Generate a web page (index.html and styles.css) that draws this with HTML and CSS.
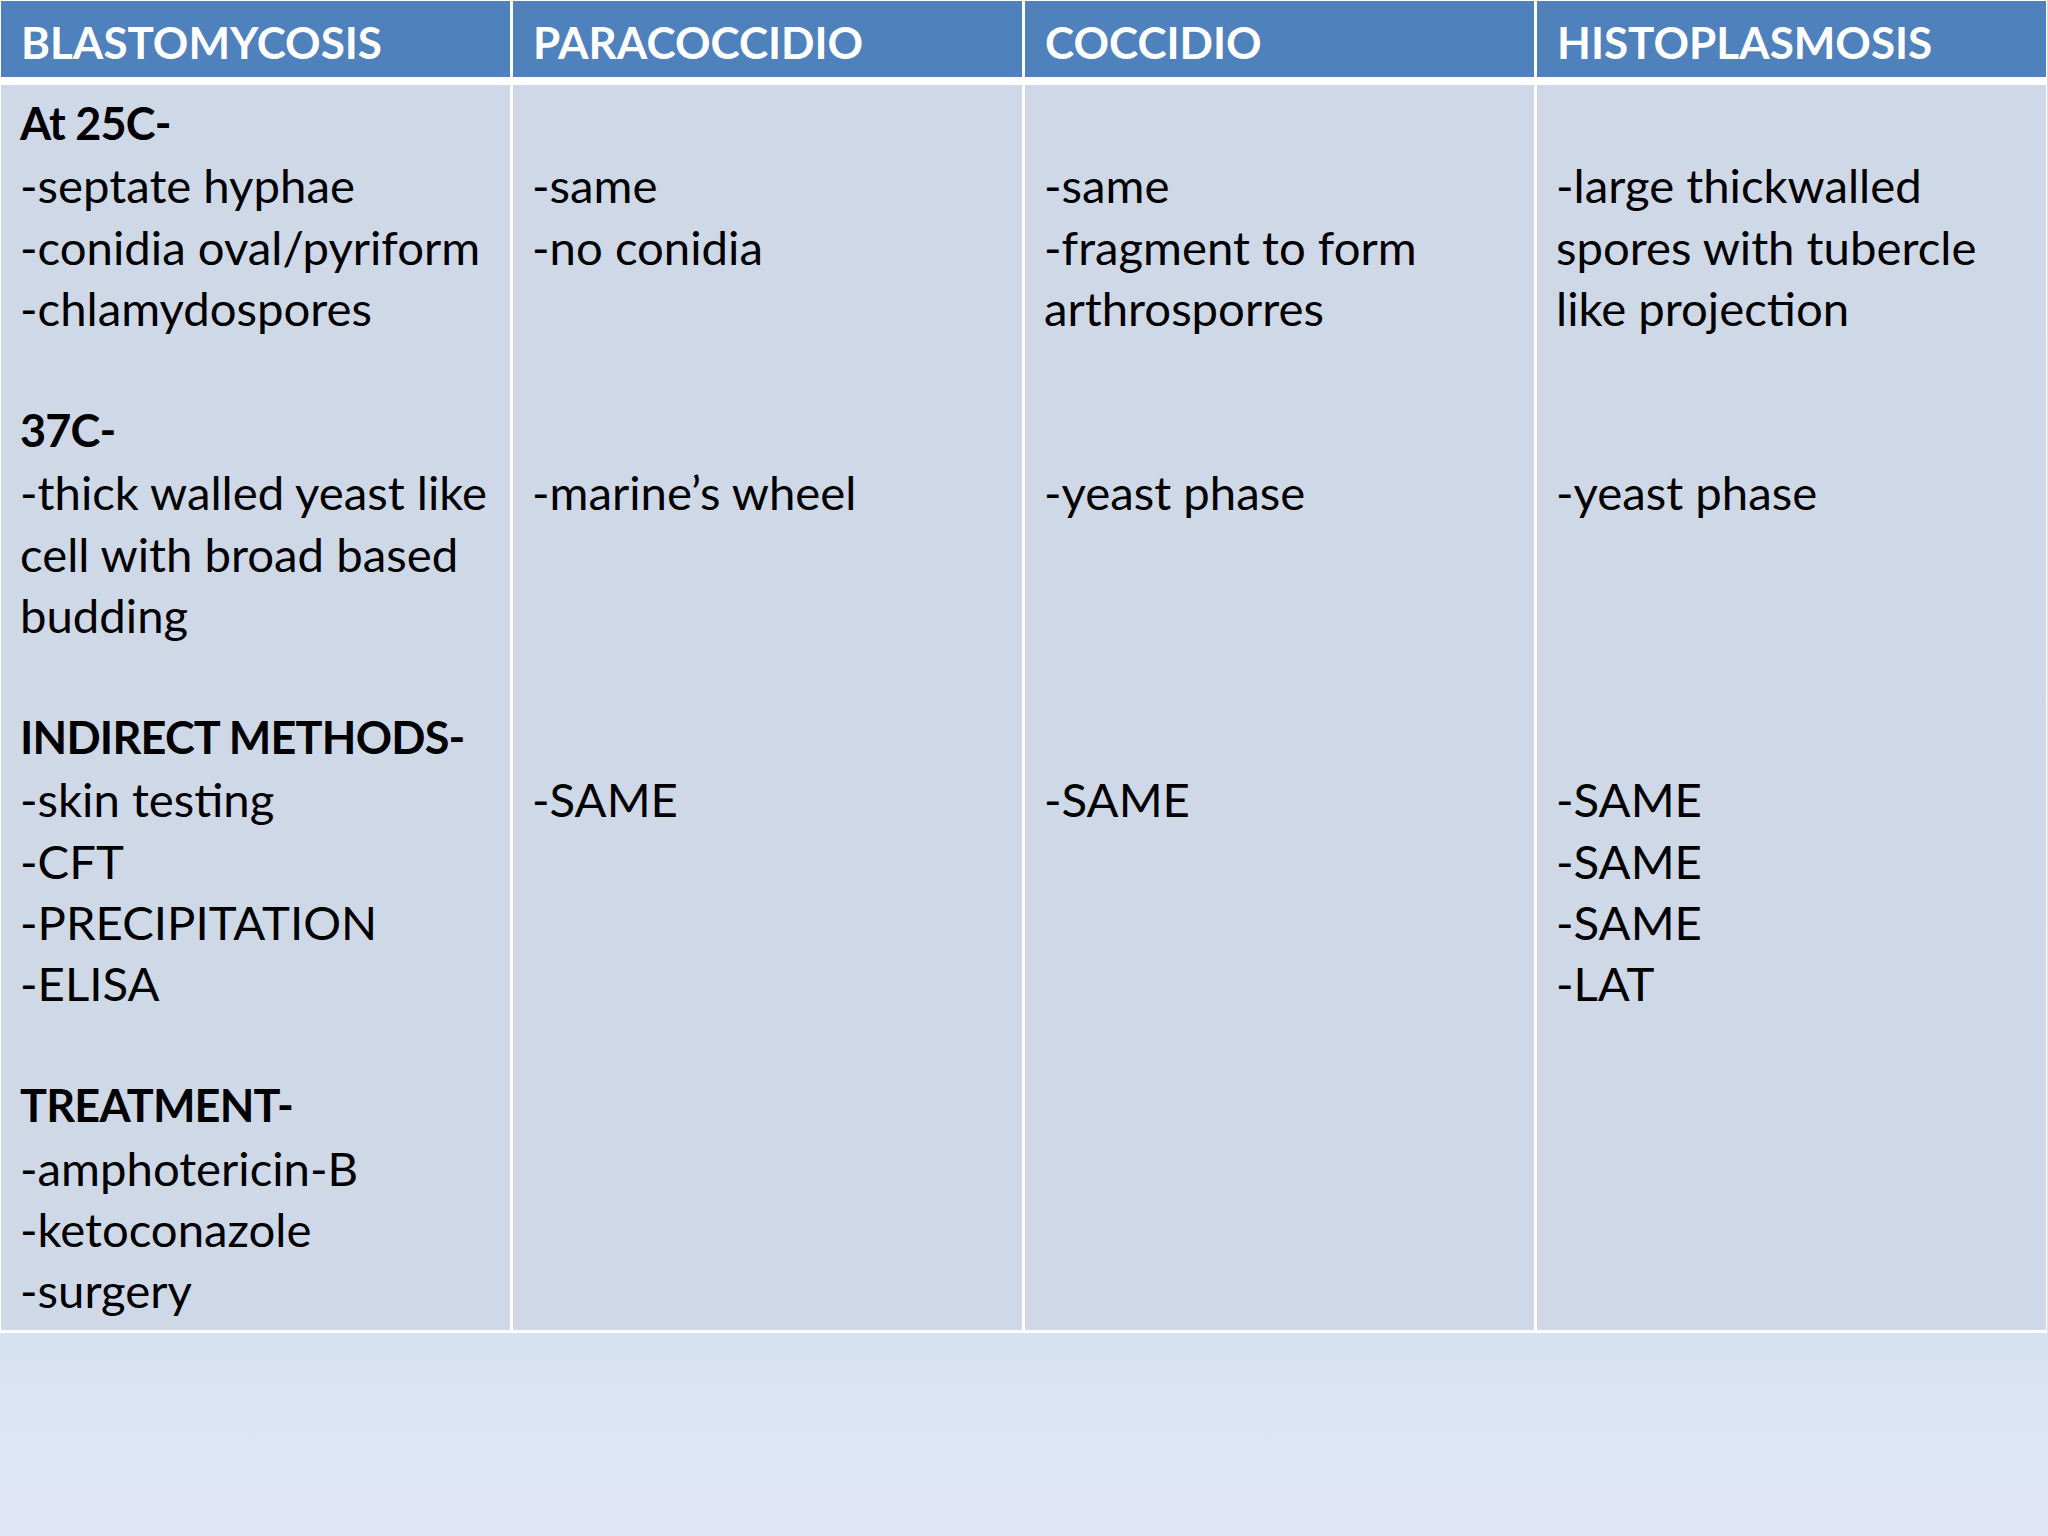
FILE: index.html
```html
<!DOCTYPE html>
<html lang="en">
<head>
<meta charset="utf-8">
<title>Dimorphic fungi comparison</title>
<link rel="stylesheet" href="styles.css">
</head>
<body>
<div class="slide">
  <div class="table">
    <div class="th">BLASTOMYCOSIS</div>
    <div class="th">PARACOCCIDIO</div>
    <div class="th">COCCIDIO</div>
    <div class="th">HISTOPLASMOSIS</div>

    <div class="td">
      <div class="ln b">At 25C-</div>
      <div class="ln">-septate hyphae</div>
      <div class="ln">-conidia oval/pyriform</div>
      <div class="ln">-chlamydospores</div>
      <div class="ln"></div>
      <div class="ln b">37C-</div>
      <div class="ln">-thick walled yeast like</div>
      <div class="ln">cell with broad based</div>
      <div class="ln">budding</div>
      <div class="ln"></div>
      <div class="ln b">INDIRECT METHODS-</div>
      <div class="ln">-skin testing</div>
      <div class="ln">-CFT</div>
      <div class="ln">-PRECIPITATION</div>
      <div class="ln">-ELISA</div>
      <div class="ln"></div>
      <div class="ln b">TREATMENT-</div>
      <div class="ln">-amphotericin-B</div>
      <div class="ln">-ketoconazole</div>
      <div class="ln">-surgery</div>
    </div>

    <div class="td">
      <div class="ln"></div>
      <div class="ln">-same</div>
      <div class="ln">-no conidia</div>
      <div class="ln"></div>
      <div class="ln"></div>
      <div class="ln"></div>
      <div class="ln">-marine’s wheel</div>
      <div class="ln"></div>
      <div class="ln"></div>
      <div class="ln"></div>
      <div class="ln"></div>
      <div class="ln">-SAME</div>
    </div>

    <div class="td">
      <div class="ln"></div>
      <div class="ln">-same</div>
      <div class="ln">-fragment to form</div>
      <div class="ln">arthrosporres</div>
      <div class="ln"></div>
      <div class="ln"></div>
      <div class="ln">-yeast phase</div>
      <div class="ln"></div>
      <div class="ln"></div>
      <div class="ln"></div>
      <div class="ln"></div>
      <div class="ln">-SAME</div>
    </div>

    <div class="td">
      <div class="ln"></div>
      <div class="ln">-large thickwalled</div>
      <div class="ln">spores with tubercle</div>
      <div class="ln">like projection</div>
      <div class="ln"></div>
      <div class="ln"></div>
      <div class="ln">-yeast phase</div>
      <div class="ln"></div>
      <div class="ln"></div>
      <div class="ln"></div>
      <div class="ln"></div>
      <div class="ln">-SAME</div>
      <div class="ln">-SAME</div>
      <div class="ln">-SAME</div>
      <div class="ln">-LAT</div>
    </div>
  </div>
</div>
</body>
</html>
```

FILE: styles.css
```css
html, body {
  margin: 0;
  padding: 0;
}

body {
  width: 2048px;
  height: 1536px;
  overflow: hidden;
  font-family: Lato, "Open Sans", "Liberation Sans", sans-serif;
}

.slide {
  width: 2048px;
  height: 1536px;
  box-sizing: border-box;
  background: linear-gradient(180deg, #d2dcea 0%, #d6e2ef 87%, #dde5f4 93%, #e0e6f7 100%);
  padding: 0 1px 0 0;
}

.table {
  display: grid;
  grid-template-columns: repeat(4, 1fr);
  grid-template-rows: 76px 1245px;
  column-gap: 3px;
  row-gap: 8px;
  padding: 1px 1px 3px 1px;
  background: #ffffff;
}

.th {
  background: #4f81bd;
  color: #ffffff;
  font-weight: 700;
  font-size: 44px;
  line-height: 70px;
  padding: 6px 0 0 20px;
  white-space: nowrap;
}

.td {
  background: #cfd8e7;
  color: #000000;
  font-size: 47.3px;
  padding: 8px 0 0 19px;
}

.ln {
  height: 61.4px;
  line-height: 61.4px;
  white-space: nowrap;
}

.b {
  font-weight: 700;
  font-size: 45px;
  letter-spacing: -0.8px;
}
```
